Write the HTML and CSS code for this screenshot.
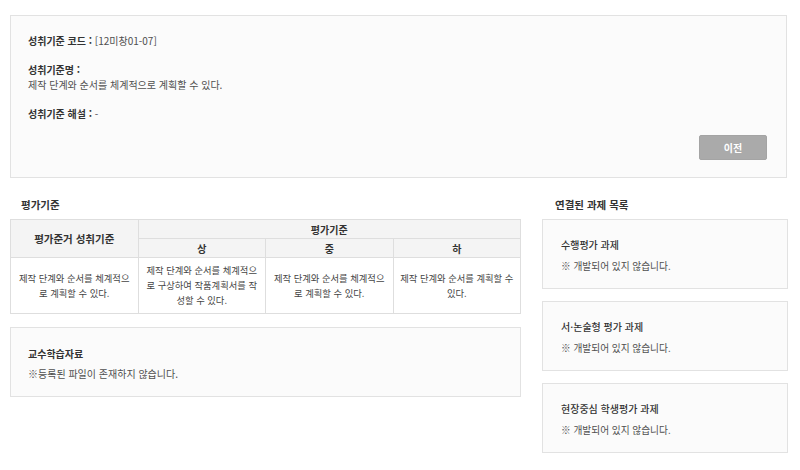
FILE: index.html
```html
<!DOCTYPE html>
<html lang="ko">
<head>
<meta charset="utf-8">
<link rel="stylesheet" href="styles.css">
</head>
<body>
<div class="page">
  <section class="top-box">
    <p class="row"><b class="lbl">성취기준 코드 :</b> [12미창01-07]</p>
    <p class="row"><b class="lbl">성취기준명 :</b><br>제작 단계와 순서를 체계적으로 계획할 수 있다.</p>
    <p class="row"><b class="lbl">성취기준 해설 :</b> -</p>
    <div class="btn-row"><button class="btn">이전</button></div>
  </section>
  <div class="lower">
    <div class="left-col">
      <h3 class="sec-title">평가기준</h3>
      <table class="crit">
        <colgroup><col class="c"><col class="c"><col class="c"><col class="c"></colgroup>
        <thead>
          <tr><th rowspan="2" class="big">평가준거 성취기준</th><th colspan="3">평가기준</th></tr>
          <tr><th class="lvl">상</th><th class="lvl">중</th><th class="lvl">하</th></tr>
        </thead>
        <tbody>
          <tr>
            <td>제작 단계와 순서를 체계적으로 계획할 수 있다.</td>
            <td>제작 단계와 순서를 체계적으로 구상하여 작품계획서를 작성할 수 있다.</td>
            <td>제작 단계와 순서를 체계적으로 계획할 수 있다.</td>
            <td>제작 단계와 순서를 계획할 수 있다.</td>
          </tr>
        </tbody>
      </table>
      <div class="box res-box">
        <div class="box-title">교수학습자료</div>
        <div class="res-note">※등록된 파일이 존재하지 않습니다.</div>
      </div>
    </div>
    <div class="right-col">
      <h3 class="sec-title right">연결된 과제 목록</h3>
      <div class="box task">
        <div class="task-title">수행평가 과제</div>
        <div class="task-note">※ 개발되어 있지 않습니다.</div>
      </div>
      <div class="box task">
        <div class="task-title">서·논술형 평가 과제</div>
        <div class="task-note">※ 개발되어 있지 않습니다.</div>
      </div>
      <div class="box task">
        <div class="task-title">현장중심 학생평가 과제</div>
        <div class="task-note">※ 개발되어 있지 않습니다.</div>
      </div>
    </div>
  </div>
</div>
</body>
</html>
```
FILE: styles.css
```css
* { box-sizing: border-box; }
html, body { margin: 0; padding: 0; background: #fff; }
body {
  font-family: "Noto Sans CJK KR", "Noto Sans", sans-serif;
  font-size: 10px;
  line-height: 15px;
  color: #4f4f4f;
}
.page { padding: 15px 13px 0 10px; width: 800px; }
.top-box {
  border: 1px solid #e2e2e2;
  background: #fbfbfb;
  padding: 17px 19px 17px 17px;
}
.row { margin: 0 0 14px 0; }
.lbl { color: #333; font-weight: bold; }
.btn-row { display: flex; justify-content: flex-end; margin-top: 1px; }
.btn {
  width: 68px; height: 25px;
  border: 1px solid #a4a4a4; border-radius: 2px;
  background: #aaa; color: #fff;
  font-family: inherit; font-size: 10px; font-weight: bold;
  padding: 0;
}
.lower {
  display: grid;
  grid-template-columns: 511px 246px;
  column-gap: 21px;
  margin-top: 19px;
}
.sec-title {
  margin: 0 0 7px 0;
  padding-left: 11px;
  font-size: 10.5px; line-height: 15px;
  color: #333; font-weight: bold;
}
.sec-title.right { padding-left: 13px; }
.crit {
  width: 511px;
  border-collapse: collapse;
  table-layout: fixed;
}
.crit .c { width: 25%; }
.crit th, .crit td {
  border: 1px solid #dedede;
  text-align: center;
}
.crit th {
  background: #f4f4f4;
  color: #333;
  font-weight: bold;
  font-size: 10px;
  height: 19px;
  padding: 0;
  line-height: 17px;
}
.crit th.big { font-size: 10.5px; }
.crit th.lvl { font-weight: 600; }
.crit td {
  padding: 5px 4px;
  height: 56px;
  font-size: 9.3px;
  color: #444;
  vertical-align: middle;
}
.box {
  border: 1px solid #e2e2e2;
  background: #fbfbfb;
}
.res-box {
  margin-top: 13px;
  height: 70px;
  padding: 18px 17px 0 17px;
}
.box-title { color: #333; font-weight: bold; }
.res-note { margin-top: 5px; }
.right-col { display: flex; flex-direction: column; }
.task {
  height: 70px;
  padding: 17px 18px 0 18px;
  margin-bottom: 12px;
}
.task-title { color: #333; font-weight: 500; }
.task-note { margin-top: 7px; font-size: 9.7px; }
```
